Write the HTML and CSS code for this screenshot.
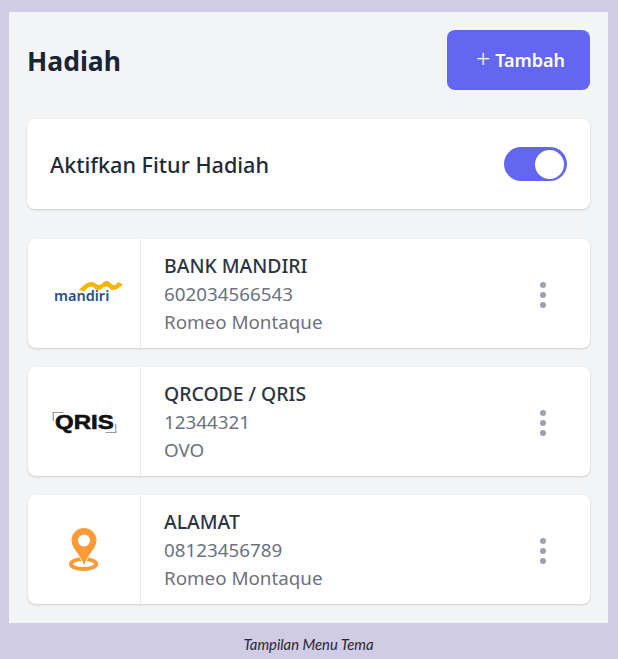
FILE: index.html
```html
<!DOCTYPE html>
<html lang="id">
<head>
<meta charset="utf-8">
<title>Hadiah</title>
<link rel="stylesheet" href="styles.css">
</head>
<body>
<main class="panel">
  <header class="top">
    <h1>Hadiah</h1>
    <button class="add"><span class="plus">+</span>Tambah</button>
  </header>
  <section class="card toggle-card">
    <span>Aktifkan Fitur Hadiah</span>
    <span class="switch"><span class="knob"></span></span>
  </section>
  <section class="list">
    <article class="card row">
      <div class="logo">
        <div class="mandiri">
          <svg class="wave" width="44" height="12" viewBox="0 0 44 12"><path d="M0 9.500 C5 5 8 2 13 2 C16 2 17 5 20 5 C23 5 24 1 28 1 C31 1 32 5 35 5 C37 5 38 3 39 2 L44 4.500 C41 7 38 10 34 10 C31 10 30 6.500 27 6.500 C24 6.500 23 10 19 10 C16 10 15 6.500 12 6.500 C9 6.500 7 10 5 11.500 Z" fill="#f7b500"/></svg>
          <span class="mandiri-word">mandiri</span>
        </div>
      </div>
      <div class="info"><h2>BANK MANDIRI</h2><p>602034566543</p><p>Romeo Montaque</p></div>
      <div class="more"><i></i><i></i><i></i></div>
    </article>
    <article class="card row">
      <div class="logo"><span class="qris">QRIS</span></div>
      <div class="info"><h2>QRCODE / QRIS</h2><p>12344321</p><p>OVO</p></div>
      <div class="more"><i></i><i></i><i></i></div>
    </article>
    <article class="card row">
      <div class="logo">
        <svg width="30" height="43" viewBox="0 0 30 43"><ellipse cx="14.500" cy="36" rx="12.700" ry="5" fill="none" stroke="#fd9a35" stroke-width="3.800"/><path fill-rule="evenodd" d="M15 0 C22 0 27.500 5.500 27.500 12.500 C27.500 20 19.500 25 15 37 C10.500 25 2.500 20 2.500 12.500 C2.500 5.500 8 0 15 0 Z M15 6.500 A6 6 0 1 0 15 18.500 A6 6 0 1 0 15 6.500 Z" fill="#fd9a35" stroke="#fff" stroke-width="1.200" paint-order="stroke"/></svg>
      </div>
      <div class="info"><h2>ALAMAT</h2><p>08123456789</p><p>Romeo Montaque</p></div>
      <div class="more"><i></i><i></i><i></i></div>
    </article>
  </section>
</main>
<p class="caption">Tampilan Menu Tema</p>
</body>
</html>
```
FILE: styles.css
```css
* { box-sizing: border-box; }
html, body { margin: 0; padding: 0; }
body {
  width: 618px;
  height: 659px;
  overflow: hidden;
  background: #d0cce5;
  padding: 12px 10px 0 9px;
  font-family: "Noto Sans", sans-serif;
}
.panel {
  height: 611px;
  background: #f3f4f6;
  padding: 18px 18px 0 18px;
}
.top {
  display: flex;
  justify-content: space-between;
  align-items: center;
  height: 60px;
}
h1 {
  margin: 2px 0 0 0;
  font-size: 26.500px;
  font-weight: 700;
  color: #1b2433;
  line-height: 60px;
}
.add {
  width: 143px;
  height: 60px;
  border: 0;
  border-radius: 8px;
  background: #6366f1;
  color: #fff;
  font: 600 18px "Noto Sans", sans-serif;
  display: flex;
  align-items: center;
  justify-content: center;
  gap: 5px;
  padding: 0 0 0 4px;
}
.plus { font-weight: 300; font-size: 25px; line-height: 1; margin-top: -4px; }
.card {
  background: #fff;
  border-radius: 8px;
  box-shadow: 0 1px 3px rgba(0,0,0,.1), 0 1px 2px rgba(0,0,0,.06);
}
.toggle-card {
  margin-top: 29px;
  height: 90px;
  display: flex;
  align-items: center;
  justify-content: space-between;
  padding: 0 23px;
  font-size: 21.600px;
  font-weight: 500;
  color: #1f2937;
}
.switch {
  width: 63px;
  height: 34px;
  border-radius: 17px;
  background: #6366f1;
  display: flex;
  justify-content: flex-end;
  align-items: center;
  padding-right: 3px;
}
.knob { width: 29px; height: 29px; border-radius: 50%; background: #fff; }
.list {
  margin-top: 30px;
  display: flex;
  flex-direction: column;
  gap: 19px;
}
.row {
  height: 109px;
  display: flex;
  align-items: stretch;
  margin-left: 1px;
}
.logo {
  width: 113px;
  flex: none;
  display: flex;
  align-items: center;
  justify-content: center;
  border-right: 1px solid #e5e7eb;
}
.mandiri { display: flex; flex-direction: column; width: 69px; margin: -4px 0 0 9px; }
.wave { align-self: flex-end; margin-bottom: -6px; display: block; }
.mandiri-word {
  font: 600 14.500px/18px "Noto Sans", sans-serif;
  color: #1f5189;
}
.qris {
  position: relative;
  font: 700 20px/24px "Liberation Sans", sans-serif;
  color: #111;
  -webkit-text-stroke: .6px #111;
  transform: scaleX(1.200);
}
.qris::before, .qris::after {
  content: "";
  position: absolute;
  width: 8px;
  height: 8px;
  border: 1px solid #999;
}
.qris::before { left: -2px; top: 2px; border-right: 0; border-bottom: 0; }
.qris::after { right: -2px; bottom: 1px; border-left: 0; border-top: 0; }
.info { flex: 1; padding: 13px 0 0 23px; }
h2 {
  margin: 0;
  font-size: 19.400px;
  font-weight: 500;
  line-height: 28px;
  color: #2b3442;
}
.info p {
  margin: 0;
  font-size: 18.800px;
  line-height: 28px;
  color: #6b7280;
}
.more {
  width: 93px;
  flex: none;
  padding: 2px 1px 0 0;
  display: flex;
  flex-direction: column;
  align-items: center;
  justify-content: center;
  gap: 4px;
}
.more i { width: 6px; height: 6px; border-radius: 50%; background: #9ca3af; display: block; }
.caption {
  margin: 12px 0 0;
  text-align: center;
  font: italic 14.800px/18px Lato, sans-serif;
  color: #2b2733;
}
```
